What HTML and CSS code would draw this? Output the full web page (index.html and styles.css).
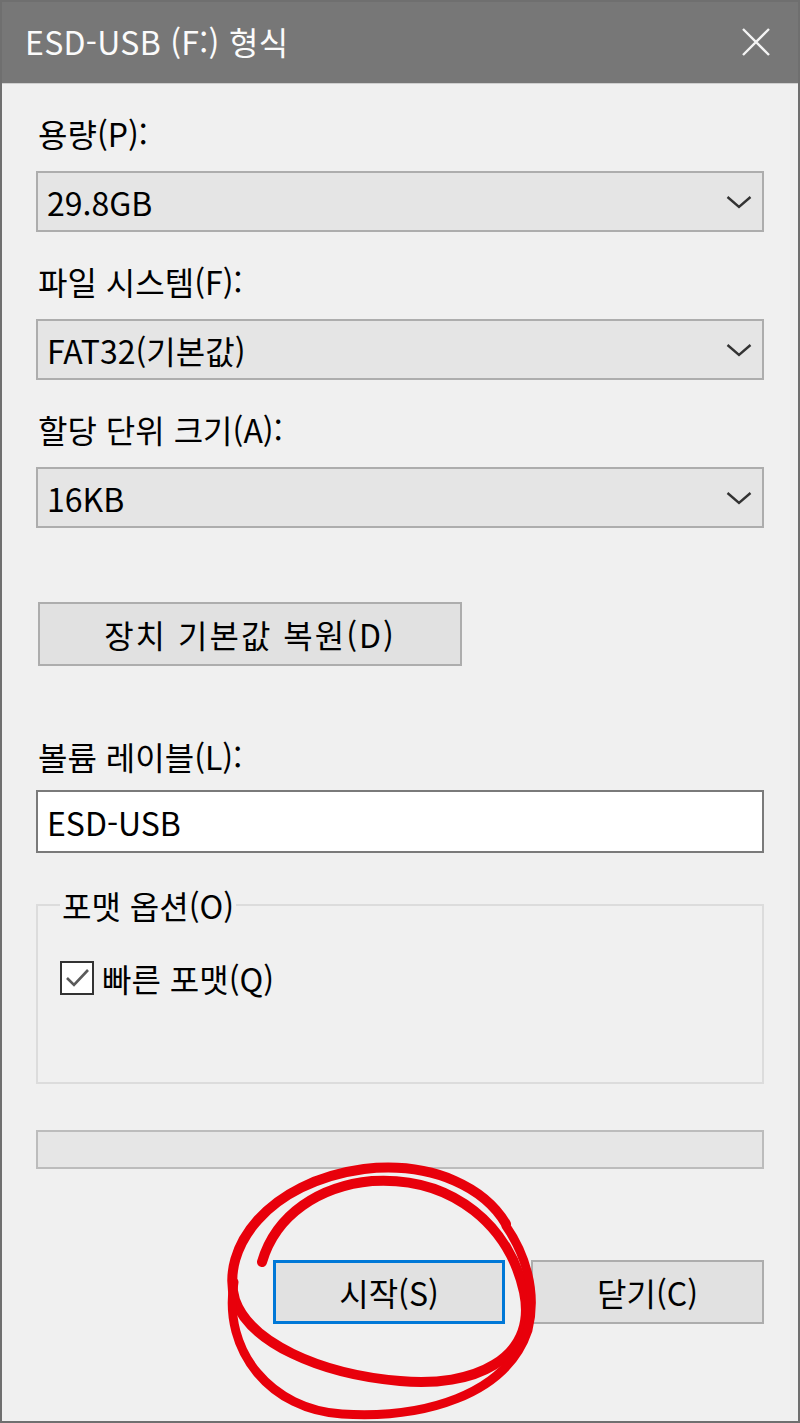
FILE: index.html
```html
<!DOCTYPE html>
<html lang="ko">
<head>
<meta charset="utf-8">
<title>ESD-USB (F:) 형식</title>
<link rel="stylesheet" href="styles.css">
</head>
<body>
<div class="window">
  <div class="titlebar">
    <span class="title">ESD-USB (F:) 형식</span>
    <svg class="close" width="30" height="30" viewBox="0 0 30 30"><path d="M2 2 L28 28 M28 2 L2 28" stroke="#f4f4f4" stroke-width="2.4" fill="none"/></svg>
  </div>
  <div class="content">
    <div class="label">용량(P):</div>
    <div class="select"><span>29.8GB</span><svg class="chev" width="26" height="14" viewBox="0 0 26 14"><path d="M1.5 2 L13 12 L24.5 2" stroke="#333" stroke-width="2.4" fill="none"/></svg></div>
    <div class="label">파일 시스템(F):</div>
    <div class="select"><span>FAT32(기본값)</span><svg class="chev" width="26" height="14" viewBox="0 0 26 14"><path d="M1.5 2 L13 12 L24.5 2" stroke="#333" stroke-width="2.4" fill="none"/></svg></div>
    <div class="label">할당 단위 크기(A):</div>
    <div class="select"><span>16KB</span><svg class="chev" width="26" height="14" viewBox="0 0 26 14"><path d="M1.5 2 L13 12 L24.5 2" stroke="#333" stroke-width="2.4" fill="none"/></svg></div>
    <div class="btn restore">장치 기본값 복원(D)</div>
    <div class="label label-vol">볼륨 레이블(L):</div>
    <div class="input">ESD-USB</div>
    <fieldset class="group">
      <legend>포맷 옵션(O)</legend>
      <div class="check-row">
        <span class="checkbox"><svg width="30" height="30" viewBox="0 0 30 30"><path d="M5 15 L12 22 L26 7" stroke="#5a5a5a" stroke-width="2.6" fill="none"/></svg></span>
        <span>빠른 포맷(Q)</span>
      </div>
    </fieldset>
    <div class="progress"></div>
    <div class="actions">
      <div class="btn start">시작(S)</div>
      <div class="btn">닫기(C)</div>
    </div>
  </div>
  <svg class="scribble" width="800" height="1423" viewBox="0 0 800 1423">
    <path d="M262,1262 C276,1214 320,1186 372,1181 C455,1176 510,1228 524,1292 C538,1360 472,1388 400,1381 C318,1374 250,1342 235,1300 C220,1248 268,1182 364,1169 C436,1161 486,1190 506,1224" stroke="#e8000b" stroke-width="10" fill="none" stroke-linecap="round"/>
    <path d="M234,1282 C222,1352 272,1410 342,1414 C422,1419 506,1396 528,1330 C538,1290 524,1252 506,1226" stroke="#e8000b" stroke-width="9" fill="none" stroke-linecap="round"/>
  </svg>
</div>
</body>
</html>
```
FILE: styles.css
```css
html, body {
  margin: 0;
  padding: 0;
}
body {
  font-family: "Noto Sans CJK KR", "Noto Sans", sans-serif;
  color: #000;
  background: #f0f0f0;
}
.window {
  position: relative;
  width: 800px;
  height: 1423px;
  box-sizing: border-box;
  border: 2px solid #6f6f6f;
  background: #f0f0f0;
  display: flex;
  flex-direction: column;
  overflow: hidden;
}
.titlebar {
  height: 81px;
  flex: none;
  background: #777777;
  display: flex;
  align-items: center;
  justify-content: space-between;
  padding: 0 27px 0 23px;
  border-bottom: 1px solid #cfcfcf;
}
.title {
  color: #fbfbfb;
  font-size: 32px;
  line-height: 40px;
  margin-top: -3px;
  letter-spacing: 0.3px;
}
.close {
  display: block;
  margin-top: -2px;
}
.content {
  display: flex;
  flex-direction: column;
  padding: 0 34px;
  font-size: 32px;
}
.label {
  height: 40px;
  line-height: 40px;
  margin-top: 29px;
  margin-bottom: 18px;
  padding-left: 2px;
}
.select {
  height: 61px;
  box-sizing: border-box;
  border: 2px solid #adadad;
  background: #e5e5e5;
  display: flex;
  align-items: center;
  justify-content: space-between;
  padding: 0 10px 0 9px;
  line-height: 40px;
}
.chev {
  display: block;
}
.btn {
  height: 64px;
  box-sizing: border-box;
  border: 2px solid #adadad;
  background: #e1e1e1;
  display: flex;
  align-items: center;
  justify-content: center;
  line-height: 40px;
}
.restore {
  width: 424px;
  margin: 74px 0 0 2px;
  letter-spacing: 2px;
}
.label-vol {
  margin-top: 70px;
  margin-bottom: 14px;
}
.input {
  height: 63px;
  box-sizing: border-box;
  border: 2px solid #7a7a7a;
  background: #fff;
  display: flex;
  align-items: center;
  padding-left: 9px;
  line-height: 40px;
}
.group {
  margin: 32px 0 0 0;
  border: 2px solid #dcdcdc;
  padding: 0 0 84px 22px;
  min-width: 0;
}
.group legend {
  padding: 0 2px;
  margin-left: 0;
  line-height: 40px;
  height: 40px;
}
.check-row {
  display: flex;
  align-items: center;
  gap: 8px;
  height: 40px;
  margin-top: 33px;
  line-height: 40px;
}
.checkbox {
  width: 34px;
  height: 34px;
  box-sizing: border-box;
  border: 2px solid #333;
  background: #fff;
  display: flex;
  align-items: center;
  justify-content: center;
}
.checkbox svg {
  display: block;
}
.progress {
  margin-top: 46px;
  height: 39px;
  box-sizing: border-box;
  border: 2px solid #bcbcbc;
  background: #e6e6e6;
}
.actions {
  margin-top: 91px;
  display: flex;
  justify-content: flex-end;
  gap: 26px;
}
.actions .btn {
  width: 233px;
}
.actions .btn.start {
  width: 232px;
  border: 3px solid #0078d7;
}
.scribble {
  position: absolute;
  left: -2px;
  top: -2px;
  pointer-events: none;
}
```
